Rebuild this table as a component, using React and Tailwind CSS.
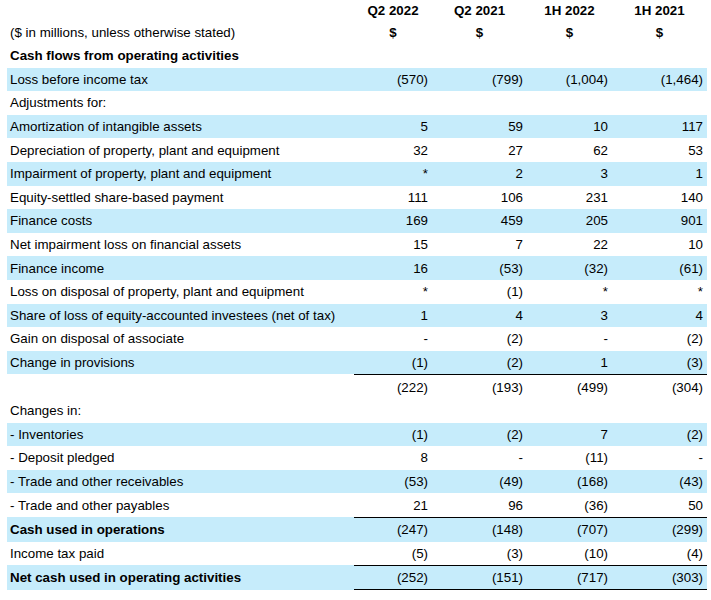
const COLS = ['Q2 2022', 'Q2 2021', '1H 2022', '1H 2021'];

const ROWS = [
  { label: 'Cash flows from operating activities', bold: true },
  { label: 'Loss before income tax', values: ['(570)', '(799)', '(1,004)', '(1,464)'], band: true },
  { label: 'Adjustments for:' },
  { label: 'Amortization of intangible assets', values: ['5', '59', '10', '117'], band: true },
  { label: 'Depreciation of property, plant and equipment', values: ['32', '27', '62', '53'] },
  { label: 'Impairment of property, plant and equipment', values: ['*', '2', '3', '1'], band: true },
  { label: 'Equity-settled share-based payment', values: ['111', '106', '231', '140'] },
  { label: 'Finance costs', values: ['169', '459', '205', '901'], band: true },
  { label: 'Net impairment loss on financial assets', values: ['15', '7', '22', '10'] },
  { label: 'Finance income', values: ['16', '(53)', '(32)', '(61)'], band: true },
  { label: 'Loss on disposal of property, plant and equipment', values: ['*', '(1)', '*', '*'] },
  { label: 'Share of loss of equity-accounted investees (net of tax)', values: ['1', '4', '3', '4'], band: true },
  { label: 'Gain on disposal of associate', values: ['-', '(2)', '-', '(2)'] },
  { label: 'Change in provisions', values: ['(1)', '(2)', '1', '(3)'], band: true },
  { label: '', values: ['(222)', '(193)', '(499)', '(304)'], lineTop: true },
  { label: 'Changes in:' },
  { label: '- Inventories', values: ['(1)', '(2)', '7', '(2)'], band: true },
  { label: '- Deposit pledged', values: ['8', '-', '(11)', '-'] },
  { label: '- Trade and other receivables', values: ['(53)', '(49)', '(168)', '(43)'], band: true },
  { label: '- Trade and other payables', values: ['21', '96', '(36)', '50'] },
  { label: 'Cash used in operations', values: ['(247)', '(148)', '(707)', '(299)'], band: true, bold: true, lineTop: true },
  { label: 'Income tax paid', values: ['(5)', '(3)', '(10)', '(4)'] },
  { label: 'Net cash used in operating activities', values: ['(252)', '(151)', '(717)', '(303)'], band: true, bold: true, lineTop: true, lineBottom: true },
];

const grid = 'grid grid-cols-[347px_78px_95px_85px_95px]';

function Row({ row }) {
  return (
    <div className={`${grid} ${row.band ? 'bg-[#c6ecfb]' : ''}`}>
      <div
        className={`flex items-center pl-[3px] whitespace-nowrap ${row.lineTop ? 'h-[24.6px]' : 'h-[23.6px]'} ${row.bold ? 'font-bold' : ''}`}
      >
        {row.label}
      </div>
      {(row.values || ['', '', '', '']).map((v, i) => (
        <div
          key={i}
          className={`flex items-center justify-end pr-[4px] ${row.lineTop ? 'border-t border-black' : ''} ${row.lineBottom ? 'border-b border-black' : ''}`}
        >
          {v}
        </div>
      ))}
    </div>
  );
}

export default function App() {
  return (
    <div className="w-[711px] h-[600px] bg-white text-black text-[13.33px] leading-none font-['Liberation_Sans',Arial,sans-serif]">
      <div className="ml-[7px] w-[700px]">
        <div className={`${grid} h-[20.5px] font-bold`}>
          <div />
          {COLS.map((c) => (
            <div key={c} className="flex items-center justify-center">{c}</div>
          ))}
        </div>
        <div className={grid}>
          <div className="flex items-center h-[23.6px] pl-[3px]">($ in millions, unless otherwise stated)</div>
          {COLS.map((c) => (
            <div key={c} className="flex items-center justify-center font-bold">$</div>
          ))}
        </div>
        {ROWS.map((row, i) => (
          <Row key={i} row={row} />
        ))}
      </div>
    </div>
  );
}
